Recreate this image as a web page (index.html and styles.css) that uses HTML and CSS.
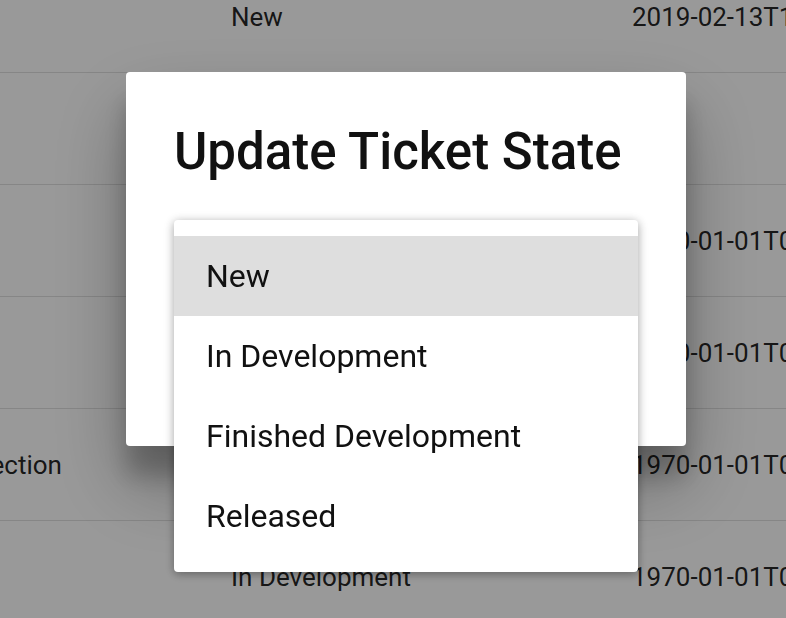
FILE: index.html
```html
<!DOCTYPE html>
<html>
<head>
<meta charset="utf-8">
<link rel="stylesheet" href="styles.css">
</head>
<body>
<div class="table">
  <div class="row first"><div class="cell c1"></div><div class="cell c2">New</div><div class="cell c3">2019-02-13T10:21:33</div></div>
  <div class="row"><div class="cell c1"></div><div class="cell c2">New</div><div class="cell c3"></div></div>
  <div class="row"><div class="cell c1"></div><div class="cell c2">In Development</div><div class="cell c3">1970-01-01T00:00:00</div></div>
  <div class="row"><div class="cell c1"></div><div class="cell c2">New</div><div class="cell c3">1970-01-01T00:00:00</div></div>
  <div class="row"><div class="cell c1">Selection</div><div class="cell c2">Released</div><div class="cell c3">1970-01-01T00:00:00</div></div>
  <div class="row"><div class="cell c1"></div><div class="cell c2">In Development</div><div class="cell c3">1970-01-01T00:00:00</div></div>
</div>
<div class="overlay"></div>
<div class="dialog">
  <h1 class="dialog-title">Update Ticket State</h1>
</div>
<div class="menu">
  <div class="menu-item active">New</div>
  <div class="menu-item">In Development</div>
  <div class="menu-item">Finished Development</div>
  <div class="menu-item">Released</div>
</div>
</body>
</html>
```
FILE: styles.css
```css
html, body {
  margin: 0;
  padding: 0;
  width: 786px;
  height: 618px;
  overflow: hidden;
  background: #ffffff;
  font-family: Roboto, "Liberation Sans", sans-serif;
}
.table {
  margin-top: -39px;
  margin-left: -45px;
  width: 900px;
}
.row {
  display: grid;
  grid-template-columns: 276px 401px 1fr;
  height: 111px;
  align-items: center;
  border-bottom: 1px solid #e0e0e0;
  font-size: 26px;
  color: rgba(0, 0, 0, 0.87);
  white-space: nowrap;
}
.cell {
  overflow: visible;
}
.overlay {
  position: fixed;
  inset: 0;
  background: rgba(0, 0, 0, 0.4);
}
.dialog {
  position: fixed;
  left: 126px;
  top: 72px;
  width: 560px;
  height: 374px;
  background: #fff;
  border-radius: 4px;
  box-shadow: 0 38px 76px rgba(0,0,0,0.3), 0 30px 24px rgba(0,0,0,0.22);
  box-sizing: border-box;
  padding: 46px 48px 0;
}
.dialog-title {
  margin: 0;
  font-size: 51px;
  font-weight: 500;
  line-height: 68px;
  color: #111111;
}
.menu {
  position: fixed;
  left: 174px;
  top: 220px;
  width: 464px;
  padding: 16px 0;
  background: #fff;
  border-radius: 4px;
  box-shadow: 0 2px 12px rgba(0,0,0,0.16), 0 2px 8px rgba(0,0,0,0.23);
}
.menu-item {
  height: 80px;
  line-height: 80px;
  padding: 0 32px;
  font-size: 32px;
  color: #111111;
}
.menu-item.active {
  background: #dedede;
}
```
